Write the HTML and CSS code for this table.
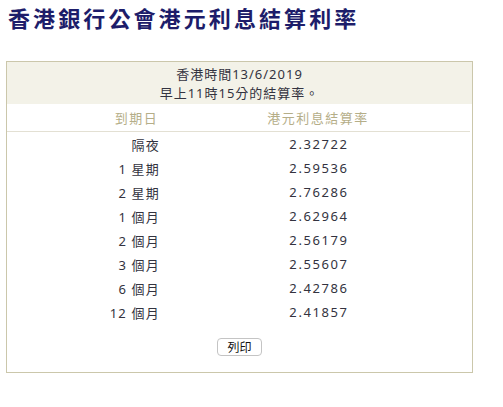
FILE: index.html
```html
<!DOCTYPE html>
<html lang="zh-Hant">
<head>
<meta charset="utf-8">
<title>香港銀行公會港元利息結算利率</title>
<link rel="stylesheet" href="styles.css">
</head>
<body>
<div class="page">
  <h1 class="title">香港銀行公會港元利息結算利率</h1>
  <div class="panel">
    <div class="panel-head">
      <div>香港時間13/6/2019</div>
      <div>早上11時15分的結算率。</div>
    </div>
    <div class="grid col-head">
      <div class="c1">到期日</div>
      <div class="c2">港元利息結算率</div>
    </div>
    <div class="rows">
      <div class="grid row"><div class="c1">隔夜</div><div class="c2">2.32722</div></div>
      <div class="grid row"><div class="c1">1 星期</div><div class="c2">2.59536</div></div>
      <div class="grid row"><div class="c1">2 星期</div><div class="c2">2.76286</div></div>
      <div class="grid row"><div class="c1">1 個月</div><div class="c2">2.62964</div></div>
      <div class="grid row"><div class="c1">2 個月</div><div class="c2">2.56179</div></div>
      <div class="grid row"><div class="c1">3 個月</div><div class="c2">2.55607</div></div>
      <div class="grid row"><div class="c1">6 個月</div><div class="c2">2.42786</div></div>
      <div class="grid row"><div class="c1">12 個月</div><div class="c2">2.41857</div></div>
    </div>
    <div class="actions">
      <button class="btn" type="button">列印</button>
    </div>
  </div>
</div>
</body>
</html>
```
FILE: styles.css
```css
html, body {
  margin: 0;
  padding: 0;
  background: #ffffff;
}
body {
  font-family: "Noto Sans", "Noto Sans CJK TC", sans-serif;
  color: #333340;
}
.page {
  padding: 4px 0 0 6px;
}
.title {
  margin: 0 0 0 2px;
  font-size: 22px;
  line-height: 26px;
  font-weight: bold;
  letter-spacing: 3.1px;
  color: #1d1d6a;
  font-family: "Noto Sans CJK TC", sans-serif;
}
.panel {
  margin-top: 31px;
  width: 465px;
  border: 1px solid #cbc7ab;
}
.panel-head {
  background: #f3f2e8;
  text-align: center;
  font-size: 13px;
  line-height: 19px;
  letter-spacing: 1px;
  padding: 3px 0 1px;
  color: #333340;
}
.grid {
  display: grid;
  grid-template-columns: 103px 50px 1fr;
  column-gap: 0;
}
.grid .c1 {
  grid-column: 2;
  white-space: nowrap;
  display: flex;
}
.grid .c2 {
  grid-column: 3;
  padding-left: 6px;
  text-align: center;
}
.col-head {
  height: 27px;
  align-items: center;
  border-bottom: 1px solid #e3e0d3;
  margin-right: 2px;
  color: #b5ae88;
  font-size: 13px;
  letter-spacing: 1.5px;
  font-family: "Noto Sans CJK TC", sans-serif;
}
.col-head .c1 {
  justify-content: center;
  padding-left: 3px;
}
.row {
  height: 24px;
  align-items: center;
  font-size: 13px;
  letter-spacing: 1.2px;
}
.row .c1 {
  justify-content: flex-end;
}
.row .c2 {
  letter-spacing: 1.6px;
}
.actions {
  display: flex;
  justify-content: center;
  padding: 14px 0 16px;
}
.btn {
  width: 45px;
  height: 18px;
  padding: 0;
  background: #ffffff;
  border: 1px solid #c4c4c4;
  border-radius: 4px;
  font-family: "Noto Sans CJK TC", sans-serif;
  font-size: 12px;
  line-height: 16px;
  color: #111111;
}
```
